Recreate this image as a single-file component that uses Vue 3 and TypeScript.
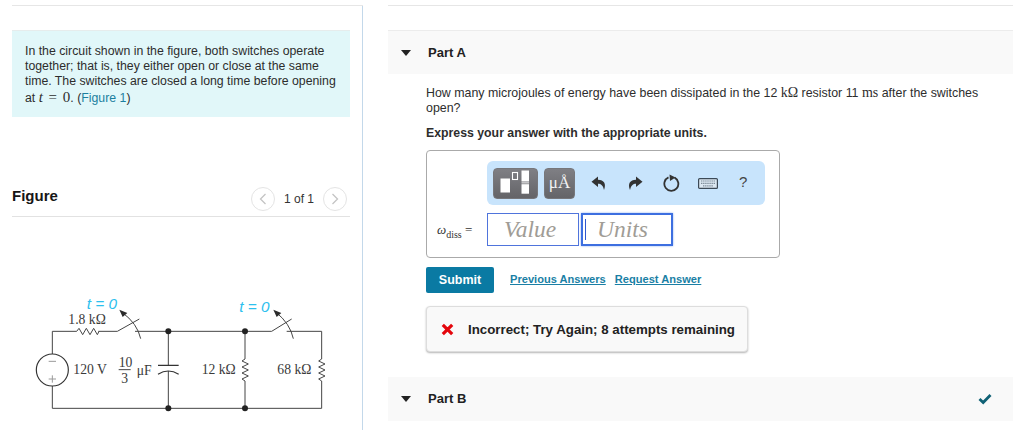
<script setup lang="ts">
const zigzagH = 'M170 139 l7 -9 l11 19 l11 -19 l11 19 l11 -19 l11 19 l5 -10'

// vertical resistor drawn downwards from the given x
const zigzagV = (x: number) =>
  `M${x} 222 l-9 6 l19 9 l-19 9 l19 9 l-19 9 l19 9 l-19 9 l9 6`
</script>

<template>
  <div class="page">
    <section class="left">
      <div class="intro">
        In the circuit shown in the figure, both switches operate together; that is, they either
        open or close at the same time. The switches are closed a long time before opening at
        <span class="math math-intro"><i>t</i> = 0</span>. (<a class="link">Figure 1</a>)
      </div>

      <div class="figure-head">
        <h2>Figure</h2>
        <div class="pager">
          <span class="circle">
            <svg width="8" height="12" viewBox="0 0 8 12"><path d="M6.5 1 L1.5 6 L6.5 11" /></svg>
          </span>
          <span class="count">1 of 1</span>
          <span class="circle">
            <svg width="8" height="12" viewBox="0 0 8 12"><path d="M1.5 1 L6.5 6 L1.5 11" /></svg>
          </span>
        </div>
      </div>

      <svg class="circuit" width="320" height="145" viewBox="0 0 960 435">
        <g class="wire">
          <path d="M170 139 H97 V207 M97 303 V370 H905 V288 M905 222 V139 H800 M755 139 H345 M292 139 H235" />
          <path d="M292 139 L358 102 M755 139 L815 102" />
          <path d="M445 139 V240 M445 258 V370 M675 139 V222 M675 288 V370" />
          <path :d="zigzagH" />
          <path :d="zigzagV(675)" />
          <path :d="zigzagV(905)" />
          <path class="thick" d="M414 241 H476 M414 268 Q445 248 476 268" />
          <circle cx="97" cy="255" r="48" class="thick" />
          <path d="M86 229 H108 M86 282 H108 M97 271 V293" class="grey" />
          <path d="M362 161 Q352 115 306 82 M820 161 Q810 115 768 82" />
          <path d="M296 254 H332" />
        </g>
        <path class="arrow" d="M298 74 L322 84 L308 96 Z M760 74 L784 84 L770 96 Z" />
        <g class="node">
          <circle cx="445" cy="139" r="9" />
          <circle cx="675" cy="139" r="9" />
          <circle cx="445" cy="370" r="9" />
          <circle cx="675" cy="370" r="9" />
        </g>
        <text x="200" y="73" class="time">t = 0</text>
        <text x="658" y="81" class="time">t = 0</text>
        <text x="145" y="116">1.8 kΩ</text>
        <text x="160" y="268">120 V</text>
        <text x="296" y="245">10</text>
        <text x="304" y="293">3</text>
        <text x="350" y="269">μF</text>
        <text x="545" y="268">12 kΩ</text>
        <text x="772" y="268">68 kΩ</text>
      </svg>
    </section>

    <section class="right">
      <header class="part">
        <span class="caret"></span>
        <span class="part-title">Part A</span>
      </header>

      <div class="body">
        <p class="question">
          How many microjoules of energy have been dissipated in the 12 <span class="math">kΩ</span>
          resistor 11 <span class="math">ms</span> after the switches open?
        </p>
        <p class="express">Express your answer with the appropriate units.</p>

        <div class="answer">
          <div class="toolbar">
            <span class="tool tool-wide">
              <svg width="36" height="26" viewBox="0 0 36 26">
                <rect x="2.500" y="8.500" width="9.500" height="14" fill="#fff" />
                <rect x="14.500" y="2.500" width="5" height="7" fill="none" stroke="#fff" stroke-width="1.100" />
                <rect x="23.500" y="0.500" width="7.500" height="11" fill="#fff" />
                <rect x="23.500" y="12.400" width="7.500" height="1" fill="#fff" />
                <rect x="23.500" y="14.200" width="7.500" height="9.500" fill="#fff" />
              </svg>
            </span>
            <span class="tool tool-unit">μÅ</span>
            <svg class="icon undo" width="16" height="16" viewBox="0 0 16 16">
              <path d="M7 1.500 L0.500 6.800 L7 12 V8.800 C10 8.800 12 10.500 13 15 C15.500 9 13 4.800 7 4.800 Z" />
            </svg>
            <svg class="icon redo" width="16" height="16" viewBox="0 0 16 16">
              <path d="M9 1.500 L15.500 6.800 L9 12 V8.800 C6 8.800 4 10.500 3 15 C0.500 9 3 4.800 9 4.800 Z" />
            </svg>
            <svg class="icon reset" width="18" height="18" viewBox="0 0 18 18">
              <path class="ring" d="M11.600 3.600 A7 7 0 1 1 5.500 3.400" />
              <path d="M6.500 0.500 L12.500 3.500 L7 7 Z" />
            </svg>
            <svg class="icon keys" width="20" height="11" viewBox="0 0 20 11">
              <rect x="0.600" y="0.600" width="18.800" height="9.800" rx="1" />
              <path d="M3 3 H17 M3 5.300 H17 M5 7.800 H15" />
            </svg>
            <span class="help">?</span>
          </div>

          <div class="entry">
            <span class="symbol"><i>ω</i><sub>diss</sub> =</span>
            <div class="field">Value</div>
            <div class="field focus"><span class="cursor"></span>Units</div>
          </div>
        </div>

        <div class="actions">
          <button type="button" class="submit">Submit</button>
          <a class="action-link first">Previous Answers</a>
          <a class="action-link">Request Answer</a>
        </div>

        <div class="feedback">
          <svg width="13" height="13" viewBox="0 0 13 13">
            <path d="M1.800 1.800 L11.200 11.200 M11.200 1.800 L1.800 11.200" />
          </svg>
          <span>Incorrect; Try Again; 8 attempts remaining</span>
        </div>
      </div>

      <header class="part part-b">
        <span class="caret"></span>
        <span class="part-title">Part B</span>
        <svg class="check" width="14" height="11" viewBox="0 0 14 11">
          <path d="M1.500 5 L5.200 8.500 L12.500 1" />
        </svg>
      </header>
    </section>
  </div>
</template>

<style>
html,
body {
  margin: 0;
  background: #fff;
}
</style>

<style scoped>
.page {
  display: flex;
  width: 1024px;
  height: 430px;
  overflow: hidden;
  box-sizing: border-box;
  padding-top: 5px;
  font-family: "Liberation Sans", Arial, sans-serif;
  color: #2d2d2d;
}

.left {
  width: 351px;
  box-sizing: content-box;
  margin-left: 12px;
  padding-top: 24px;
  border-top: 1px solid #e6e6e6;
  position: relative;
}

.left::after {
  content: "";
  position: absolute;
  top: 0;
  bottom: 0;
  right: 0;
  width: 1px;
  background: #c3d8ea;
}

.intro {
  width: 338px;
  height: 87px;
  box-sizing: border-box;
  padding: 13px 8px 0 13px;
  background: #e1f7f9;
  border-top: 1px solid #e6ecec;
  font-size: 12.300px;
  line-height: 15.200px;
}

.math {
  font-family: "Liberation Serif", serif;
  font-size: 14px;
  line-height: 1;
}

.math-intro {
  display: inline-block;
  font-size: 15px;
  word-spacing: 2px;
}

.link {
  color: #1b7f9f;
}

.figure-head {
  width: 338px;
  height: 100px;
  box-sizing: border-box;
  border-bottom: 1px solid #e2e2e2;
  display: flex;
  justify-content: space-between;
  align-items: flex-end;
  padding-bottom: 5px;
}

.figure-head h2 {
  margin: 0 0 7px;
  font-size: 15px;
  line-height: 17px;
  color: #161616;
}

.pager {
  display: flex;
  align-items: center;
  gap: 9px;
  padding-right: 3px;
}

.count {
  font-size: 12px;
  color: #333;
}

.circle {
  width: 24px;
  height: 24px;
  border: 1px solid #e4e4e4;
  border-radius: 50%;
  box-sizing: border-box;
  display: flex;
  align-items: center;
  justify-content: center;
}

.circle path {
  fill: none;
  stroke: #c4c4c4;
  stroke-width: 1.300;
}

.circuit {
  display: block;
  margin: 68px 0 0 8px;
}

.wire path,
.wire circle {
  fill: none;
  stroke: #454545;
  stroke-width: 3;
}

.wire .thick {
  stroke-width: 3.500;
  stroke: #333;
}

.wire .grey {
  stroke: #999;
}

.arrow {
  fill: #2b2b2b;
}

.node {
  fill: #222;
}

.circuit text {
  font-family: "Liberation Serif", serif;
  font-size: 41px;
  fill: #3a3a3a;
}

.circuit .time {
  font-family: "Liberation Sans", sans-serif;
  font-style: italic;
  font-size: 46px;
  fill: #2cc0ee;
}

.right {
  width: 625px;
  margin-left: 25px;
  border-top: 1px solid #e6e6e6;
  padding-top: 24px;
}

.part {
  height: 44px;
  background: #f9f9f9;
  border-top: 1px solid #ececec;
  box-sizing: border-box;
  display: flex;
  align-items: center;
  padding-left: 13px;
  font-size: 13px;
  font-weight: 700;
  color: #222;
}

.caret {
  width: 0;
  height: 0;
  border-left: 5px solid transparent;
  border-right: 5px solid transparent;
  border-top: 6px solid #222;
  margin-right: 17px;
}

.part-title {
  line-height: 16px;
}

.part-b {
  border-top: none;
  margin-top: 25px;
  justify-content: flex-start;
}

.check {
  margin-left: auto;
  margin-right: 21px;
}

.check path {
  fill: none;
  stroke: #0f6175;
  stroke-width: 2.800;
}

.body {
  padding-left: 38px;
}

.question {
  margin: 12px 0 0;
  width: 560px;
  font-size: 12.400px;
  line-height: 15px;
}

.express {
  margin: 10px 0 0;
  font-size: 12.300px;
  line-height: 15px;
  font-weight: 700;
}

.answer {
  width: 354px;
  height: 108px;
  margin-top: 9px;
  box-sizing: border-box;
  border: 1px solid #aaa;
  border-radius: 4px;
  padding: 10px 14px 0 60px;
  position: relative;
}

.toolbar {
  width: 278px;
  height: 44px;
  background: #c8e4fc;
  border-radius: 6px;
  display: flex;
  align-items: center;
  box-sizing: border-box;
  padding-left: 6px;
}

.tool {
  height: 31px;
  border-radius: 4px;
  background: linear-gradient(#7f7f84, #646468);
  border: 1px solid #77777b;
  box-sizing: border-box;
  display: flex;
  align-items: center;
  justify-content: center;
}

.tool-wide {
  width: 45px;
}

.tool-unit {
  width: 31px;
  margin-left: 6px;
  color: #f2f2f2;
  font-family: "Liberation Serif", serif;
  font-size: 17px;
}

.icon {
  flex: none;
}

.undo {
  margin-left: 16px;
}

.redo {
  margin-left: 20px;
}

.undo path,
.redo path {
  fill: #333;
}

.reset {
  margin-left: 20px;
}

.reset .ring {
  fill: none;
  stroke: #333;
  stroke-width: 1.800;
}

.reset path {
  fill: #333;
}

.keys {
  margin-left: 17px;
}

.keys rect {
  fill: #dbe7f1;
  stroke: #3c4a57;
  stroke-width: 1.200;
}

.keys path {
  fill: none;
  stroke: #7d8b98;
  stroke-width: 1.200;
  stroke-dasharray: 1.400 0.700;
}

.help {
  margin-left: 21px;
  margin-top: -3px;
  font-size: 15px;
  color: #444;
}

.entry {
  display: flex;
  align-items: center;
  margin: 8px 0 0 -50px;
}

.symbol {
  width: 50px;
  font-family: "Liberation Serif", serif;
  font-size: 13px;
  color: #333;
}

.symbol sub {
  font-size: 10px;
  line-height: 0;
}

.field {
  width: 92px;
  height: 33px;
  box-sizing: border-box;
  border: 1px solid #4f74dc;
  padding-left: 16px;
  font-family: "Liberation Serif", serif;
  font-style: italic;
  font-size: 23.500px;
  line-height: 30px;
  color: #a09c96;
  position: relative;
}

.focus {
  margin-left: 2px;
  border: 2px solid #3d6fe0;
  box-shadow: 0 0 2px #8fb0f0;
  line-height: 29px;
  padding-left: 14px;
}

.cursor {
  position: absolute;
  left: 2px;
  top: 4px;
  width: 1px;
  height: 21px;
  background: #2f58d0;
}

.actions {
  display: flex;
  align-items: center;
  margin-top: 9px;
}

.submit {
  width: 68px;
  height: 26px;
  padding: 0;
  border: none;
  border-radius: 2px;
  background: #0a7aa3;
  color: #fff;
  font-family: inherit;
  font-size: 12.500px;
  font-weight: 700;
}

.action-link {
  font-size: 11.100px;
  font-weight: 700;
  color: #1a7fa5;
  text-decoration: underline;
  margin-left: 9px;
  margin-top: -2px;
}

.action-link.first {
  margin-left: 16px;
}

.feedback {
  width: 322px;
  height: 46px;
  margin-top: 13px;
  box-sizing: border-box;
  border: 1px solid #ddd;
  border-radius: 4px;
  background: #f9f9f9;
  box-shadow: 0 1px 2px #b5b5b5;
  display: flex;
  align-items: center;
  padding-left: 14px;
  font-size: 13.300px;
  font-weight: 700;
  color: #222;
}

.feedback span {
  margin-left: 14px;
}

.feedback path {
  fill: none;
  stroke: #e4060c;
  stroke-width: 3.200;
}
</style>
